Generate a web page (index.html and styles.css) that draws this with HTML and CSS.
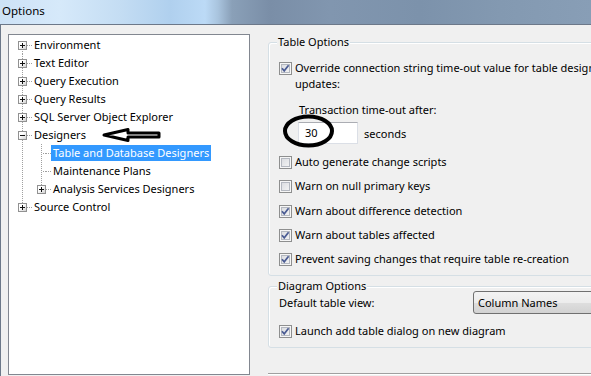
FILE: index.html
```html
<!DOCTYPE html>
<html>
<head>
<meta charset="utf-8">
<link rel="stylesheet" href="styles.css">
</head>
<body>
<div class="titlebar">Options</div>
<div class="main">
  <div class="tree">
    <div class="row"><span class="g v-first"><i class="exp plus"></i></span><span class="h"></span><span class="lbl">Environment</span></div>
    <div class="row"><span class="g v-full"><i class="exp plus"></i></span><span class="h"></span><span class="lbl">Text Editor</span></div>
    <div class="row"><span class="g v-full"><i class="exp plus"></i></span><span class="h"></span><span class="lbl">Query Execution</span></div>
    <div class="row"><span class="g v-full"><i class="exp plus"></i></span><span class="h"></span><span class="lbl">Query Results</span></div>
    <div class="row"><span class="g v-full"><i class="exp plus"></i></span><span class="h"></span><span class="lbl">SQL Server Object Explorer</span></div>
    <div class="row"><span class="g v-full"><i class="exp minus"></i></span><span class="h"></span><span class="lbl">Designers</span></div>
    <div class="row"><span class="g v-full"></span><span class="sp"></span><span class="g v-full-h"></span><span class="h"></span><span class="lbl sel">Table and Database Designers</span></div>
    <div class="row"><span class="g v-full"></span><span class="sp"></span><span class="g v-full-h"></span><span class="h"></span><span class="lbl">Maintenance Plans</span></div>
    <div class="row"><span class="g v-full"></span><span class="sp"></span><span class="g v-top"><i class="exp plus"></i></span><span class="h"></span><span class="lbl">Analysis Services Designers</span></div>
    <div class="row"><span class="g v-top"><i class="exp plus"></i></span><span class="h"></span><span class="lbl">Source Control</span></div>
  </div>

  <div class="pane">
    <div class="group group-table">
      <div class="gtitle">Table Options</div>
      <div class="cbrow first">
        <span class="cb"><svg width="11" height="11" viewBox="0 0 11 11"><path d="M2 5.2 L4.2 7.8 L8.6 2.2" fill="none" stroke="#4a5b93" stroke-width="1.7"/></svg></span>
        <span class="nowrap">Override connection string time-out value for table designer<br>updates:</span>
      </div>
      <div class="tlabel">Transaction time-out after:</div>
      <div class="trow">
        <span class="textbox">30</span>
        <span class="unit">seconds</span>
      </div>
      <div class="cbrow gap1"><span class="cb"></span><span>Auto generate change scripts</span></div>
      <div class="cbrow gapn"><span class="cb"></span><span>Warn on null primary keys</span></div>
      <div class="cbrow gapn"><span class="cb"><svg width="11" height="11" viewBox="0 0 11 11"><path d="M2 5.2 L4.2 7.8 L8.6 2.2" fill="none" stroke="#4a5b93" stroke-width="1.7"/></svg></span><span>Warn about difference detection</span></div>
      <div class="cbrow gapn"><span class="cb"><svg width="11" height="11" viewBox="0 0 11 11"><path d="M2 5.2 L4.2 7.8 L8.6 2.2" fill="none" stroke="#4a5b93" stroke-width="1.7"/></svg></span><span>Warn about tables affected</span></div>
      <div class="cbrow gapn"><span class="cb"><svg width="11" height="11" viewBox="0 0 11 11"><path d="M2 5.2 L4.2 7.8 L8.6 2.2" fill="none" stroke="#4a5b93" stroke-width="1.7"/></svg></span><span>Prevent saving changes that require table re-creation</span></div>
    </div>

    <div class="group group-diagram">
      <div class="gtitle">Diagram Options</div>
      <div class="drow">
        <span class="dlabel">Default table view:</span>
        <span class="select">Column Names</span>
      </div>
      <div class="cbrow launch"><span class="cb"><svg width="11" height="11" viewBox="0 0 11 11"><path d="M2 5.2 L4.2 7.8 L8.6 2.2" fill="none" stroke="#4a5b93" stroke-width="1.7"/></svg></span><span>Launch add table dialog on new diagram</span></div>
    </div>
    <div class="sep"></div>
  </div>
</div>

<svg class="arrow" width="64" height="26" viewBox="0 0 64 26">
  <polygon points="4,13 28,7.5 28,11 59,11 59,15 28,15 28,18.5" fill="#fff" stroke="#000" stroke-width="3" stroke-linejoin="round"/>
</svg>
<svg class="circle" width="56" height="38" viewBox="0 0 56 38">
  <ellipse cx="27.5" cy="18" rx="23.5" ry="14.5" fill="none" stroke="#000" stroke-width="4"/>
</svg>
</body>
</html>
```
FILE: styles.css
```css
* { box-sizing: border-box; }
html, body { margin: 0; padding: 0; }
body {
  width: 591px;
  height: 376px;
  overflow: hidden;
  position: relative;
  background: #f0f0f0;
  font-family: "Noto Sans", "Open Sans", sans-serif;
  font-size: 11px;
  color: #000;
}
.titlebar {
  height: 24px;
  line-height: 22px;
  padding-left: 2px;
  font-size: 11.5px;
  background: linear-gradient(to right, #cde2f6 0px, #d6e9fa 60px, #c4ddf3 120px, #b0d0ee 170px, #bcdaf6 205px, #a9c4de 218px, #8aa0b8 232px, #7a8ea7 270px, #8196af 330px, #7c92ab 420px, #8399b1 500px, #889eb6 591px);
}
.main {
  height: 352px;
  border-top: 1px solid #6c7889;
  border-left: 1px solid #6c7889;
  display: flex;
  align-items: flex-start;
  gap: 18px;
  padding: 9px 0 0 7px;
}
.tree {
  flex: none;
  width: 242px;
  height: 341px;
  background: #fff;
  border: 1px solid #828790;
  padding: 1px 0 0 9px;
}
.row {
  display: flex;
  height: 18px;
  align-items: center;
}
.g {
  flex: none;
  width: 9px;
  height: 18px;
  display: flex;
  align-items: center;
  justify-content: center;
}
.v-full {
  background: repeating-linear-gradient(to bottom, #a0a0a0 0 1px, transparent 1px 2px) 4px 0 / 1px 18px no-repeat;
}
.v-first {
  background: repeating-linear-gradient(to bottom, #a0a0a0 0 1px, transparent 1px 2px) 4px 9px / 1px 9px no-repeat;
}
.v-top {
  background: repeating-linear-gradient(to bottom, #a0a0a0 0 1px, transparent 1px 2px) 4px 0 / 1px 9px no-repeat;
}
.v-full-h {
  background:
    repeating-linear-gradient(to bottom, #a0a0a0 0 1px, transparent 1px 2px) 4px 0 / 1px 18px no-repeat,
    repeating-linear-gradient(to right, transparent 0 1px, #a0a0a0 1px 2px) 5px 9px / 4px 1px no-repeat;
}
.h {
  flex: none;
  width: 5px;
  height: 18px;
  background: repeating-linear-gradient(to right, #a0a0a0 0 1px, transparent 1px 2px) 0 9px / 5px 1px no-repeat;
}
.sp { flex: none; width: 10px; }
.exp {
  display: grid;
  place-items: center;
  width: 9px;
  height: 9px;
  border: 1px solid #919191;
  background: linear-gradient(135deg, #ffffff 35%, #d2d2d2);
}
.exp::before {
  content: "";
  grid-area: 1 / 1;
  width: 5px;
  height: 1px;
  background: #111;
}
.exp.plus::after {
  content: "";
  grid-area: 1 / 1;
  width: 1px;
  height: 5px;
  background: #111;
}
.lbl {
  padding: 0 2px;
  line-height: 16px;
  white-space: nowrap;
}
.lbl.sel {
  background: #3399ff;
  color: #fff;
}

.pane {
  flex: none;
  width: 340px;
}
.group {
  border: 1px solid #d5dfe5;
  border-radius: 3px;
  box-shadow: inset 1px 1px 0 #fff;
  padding: 0 0 8px 10px;
}
.group-table { margin-top: 8px; }
.group-diagram { margin-top: 10px; }
.gtitle {
  margin: -9px 0 0 -2px;
  padding: 0 1px;
  width: fit-content;
  background: #f0f0f0;
  line-height: 16px;
}
.cbrow {
  display: flex;
  align-items: flex-start;
  gap: 3px;
  line-height: 16px;
  white-space: nowrap;
}
.cbrow.first { margin-top: 10px; }
.cbrow.gap1 { margin-top: 10px; }
.cbrow.gapn { margin-top: 8.33px; }
.cbrow.launch { margin-top: 9px; }
.cb {
  flex: none;
  margin-top: 2px;
  width: 13px;
  height: 13px;
  border: 1px solid #8e8f8f;
  background: linear-gradient(135deg, #d6d8dc, #f8f8f8);
  box-shadow: inset 0 0 0 1px #f6f6f6, inset 0 0 0 2px #b4b8c0;
  display: grid;
  place-items: center;
}
.cb svg { display: block; }
.nowrap { white-space: nowrap; }
.tlabel {
  margin-top: 10px;
  padding-left: 20px;
  line-height: 16px;
}
.trow {
  margin-top: 4px;
  padding-left: 19px;
  display: flex;
  align-items: center;
}
.textbox {
  width: 60px;
  height: 22px;
  background: #fff;
  border: 1px solid #dbdfe6;
  border-top-color: #abadb3;
  padding-left: 6px;
  line-height: 20px;
}
.unit { margin-left: 6px; }
.drow {
  margin-top: -3px;
  display: flex;
  align-items: center;
  height: 23px;
}
.dlabel { width: 194px; flex: none; }
.select {
  flex: none;
  width: 200px;
  height: 23px;
  line-height: 21px;
  padding-left: 4px;
  border: 1px solid #707070;
  border-radius: 3px;
  background: linear-gradient(to bottom, #f3f3f3 0%, #ececec 50%, #dedede 51%, #d2d2d2 100%);
}
.sep {
  margin-top: 25px;
  height: 2px;
  border-top: 1px solid #a0a0a0;
  border-bottom: 1px solid #fff;
}
.arrow {
  position: absolute;
  left: 100px;
  top: 122px;
}
.circle {
  position: absolute;
  left: 281px;
  top: 113px;
}
```
